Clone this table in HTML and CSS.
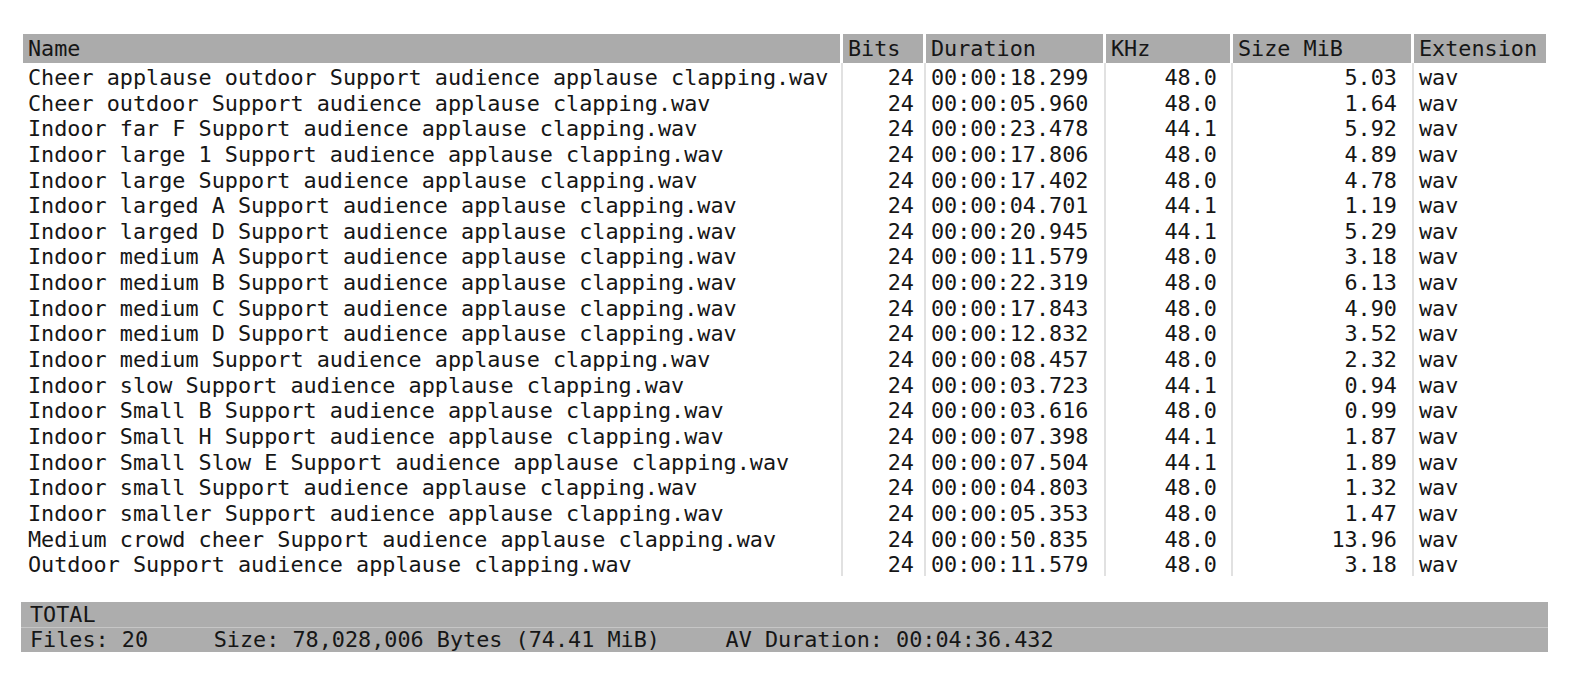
FILE: index.html
```html
<!DOCTYPE html>
<html>
<head>
<meta charset="utf-8">
<link rel="stylesheet" href="styles.css">
</head>
<body>
<div class="page">
  <div class="table">
    <div class="row head">
      <div class="cell">Name</div>
      <div class="cell">Bits</div>
      <div class="cell">Duration</div>
      <div class="cell">KHz</div>
      <div class="cell">Size MiB</div>
      <div class="cell">Extension</div>
    </div>
    <div class="body">
      <div class="row"><div class="cell">Cheer applause outdoor Support audience applause clapping.wav</div><div class="cell bits">24</div><div class="cell">00:00:18.299</div><div class="cell khz">48.0</div><div class="cell size">5.03</div><div class="cell">wav</div></div>
      <div class="row"><div class="cell">Cheer outdoor Support audience applause clapping.wav</div><div class="cell bits">24</div><div class="cell">00:00:05.960</div><div class="cell khz">48.0</div><div class="cell size">1.64</div><div class="cell">wav</div></div>
      <div class="row"><div class="cell">Indoor far F Support audience applause clapping.wav</div><div class="cell bits">24</div><div class="cell">00:00:23.478</div><div class="cell khz">44.1</div><div class="cell size">5.92</div><div class="cell">wav</div></div>
      <div class="row"><div class="cell">Indoor large 1 Support audience applause clapping.wav</div><div class="cell bits">24</div><div class="cell">00:00:17.806</div><div class="cell khz">48.0</div><div class="cell size">4.89</div><div class="cell">wav</div></div>
      <div class="row"><div class="cell">Indoor large Support audience applause clapping.wav</div><div class="cell bits">24</div><div class="cell">00:00:17.402</div><div class="cell khz">48.0</div><div class="cell size">4.78</div><div class="cell">wav</div></div>
      <div class="row"><div class="cell">Indoor larged A Support audience applause clapping.wav</div><div class="cell bits">24</div><div class="cell">00:00:04.701</div><div class="cell khz">44.1</div><div class="cell size">1.19</div><div class="cell">wav</div></div>
      <div class="row"><div class="cell">Indoor larged D Support audience applause clapping.wav</div><div class="cell bits">24</div><div class="cell">00:00:20.945</div><div class="cell khz">44.1</div><div class="cell size">5.29</div><div class="cell">wav</div></div>
      <div class="row"><div class="cell">Indoor medium A Support audience applause clapping.wav</div><div class="cell bits">24</div><div class="cell">00:00:11.579</div><div class="cell khz">48.0</div><div class="cell size">3.18</div><div class="cell">wav</div></div>
      <div class="row"><div class="cell">Indoor medium B Support audience applause clapping.wav</div><div class="cell bits">24</div><div class="cell">00:00:22.319</div><div class="cell khz">48.0</div><div class="cell size">6.13</div><div class="cell">wav</div></div>
      <div class="row"><div class="cell">Indoor medium C Support audience applause clapping.wav</div><div class="cell bits">24</div><div class="cell">00:00:17.843</div><div class="cell khz">48.0</div><div class="cell size">4.90</div><div class="cell">wav</div></div>
      <div class="row"><div class="cell">Indoor medium D Support audience applause clapping.wav</div><div class="cell bits">24</div><div class="cell">00:00:12.832</div><div class="cell khz">48.0</div><div class="cell size">3.52</div><div class="cell">wav</div></div>
      <div class="row"><div class="cell">Indoor medium Support audience applause clapping.wav</div><div class="cell bits">24</div><div class="cell">00:00:08.457</div><div class="cell khz">48.0</div><div class="cell size">2.32</div><div class="cell">wav</div></div>
      <div class="row"><div class="cell">Indoor slow Support audience applause clapping.wav</div><div class="cell bits">24</div><div class="cell">00:00:03.723</div><div class="cell khz">44.1</div><div class="cell size">0.94</div><div class="cell">wav</div></div>
      <div class="row"><div class="cell">Indoor Small B Support audience applause clapping.wav</div><div class="cell bits">24</div><div class="cell">00:00:03.616</div><div class="cell khz">48.0</div><div class="cell size">0.99</div><div class="cell">wav</div></div>
      <div class="row"><div class="cell">Indoor Small H Support audience applause clapping.wav</div><div class="cell bits">24</div><div class="cell">00:00:07.398</div><div class="cell khz">44.1</div><div class="cell size">1.87</div><div class="cell">wav</div></div>
      <div class="row"><div class="cell">Indoor Small Slow E Support audience applause clapping.wav</div><div class="cell bits">24</div><div class="cell">00:00:07.504</div><div class="cell khz">44.1</div><div class="cell size">1.89</div><div class="cell">wav</div></div>
      <div class="row"><div class="cell">Indoor small Support audience applause clapping.wav</div><div class="cell bits">24</div><div class="cell">00:00:04.803</div><div class="cell khz">48.0</div><div class="cell size">1.32</div><div class="cell">wav</div></div>
      <div class="row"><div class="cell">Indoor smaller Support audience applause clapping.wav</div><div class="cell bits">24</div><div class="cell">00:00:05.353</div><div class="cell khz">48.0</div><div class="cell size">1.47</div><div class="cell">wav</div></div>
      <div class="row"><div class="cell">Medium crowd cheer Support audience applause clapping.wav</div><div class="cell bits">24</div><div class="cell">00:00:50.835</div><div class="cell khz">48.0</div><div class="cell size">13.96</div><div class="cell">wav</div></div>
      <div class="row"><div class="cell">Outdoor Support audience applause clapping.wav</div><div class="cell bits">24</div><div class="cell">00:00:11.579</div><div class="cell khz">48.0</div><div class="cell size">3.18</div><div class="cell">wav</div></div>
    </div>
  </div>
  <div class="total">
    <div class="total-line">TOTAL</div>
    <div class="total-line">Files: 20     Size: 78,028,006 Bytes (74.41 MiB)     AV Duration: 00:04:36.432</div>
  </div>
</div>
</body>
</html>
```

FILE: styles.css
```css
html, body {
  margin: 0;
  padding: 0;
  background: #ffffff;
}

.page {
  padding: 34px 0 0 21px;
  font-family: "DejaVu Sans Mono", "Liberation Mono", monospace;
  font-size: 21.8px;
  color: #161616;
}

.table {
  margin-left: 2px;
  width: 1523px;
}

.row {
  display: grid;
  grid-template-columns: 817px 80px 177px 124px 178px 132px;
  column-gap: 3px;
}

.cell {
  box-sizing: border-box;
  padding: 0 0 0 5px;
  white-space: pre;
}

.head .cell {
  background: #ababab;
  height: 29px;
  line-height: 29px;
}

.body .row .cell {
  height: 25.65px;
  padding-top: 4px;
  line-height: 21.65px;
}

.body .row .cell + .cell {
  box-shadow: -2px 0 0 0 #e1e1e1;
}

.body .row .bits {
  text-align: right;
  padding-right: 9px;
}

.body .row .khz {
  text-align: right;
  padding-right: 13px;
}

.body .row .size {
  text-align: right;
  padding-right: 14px;
}

.total {
  margin-top: 26px;
  width: 1527px;
  background: #adadad;
}

.total-line {
  height: 25px;
  line-height: 25px;
  padding-left: 9px;
  white-space: pre;
}

.total-line + .total-line {
  border-top: 1px solid #c6c6c6;
  height: 24px;
  line-height: 24px;
}
```
